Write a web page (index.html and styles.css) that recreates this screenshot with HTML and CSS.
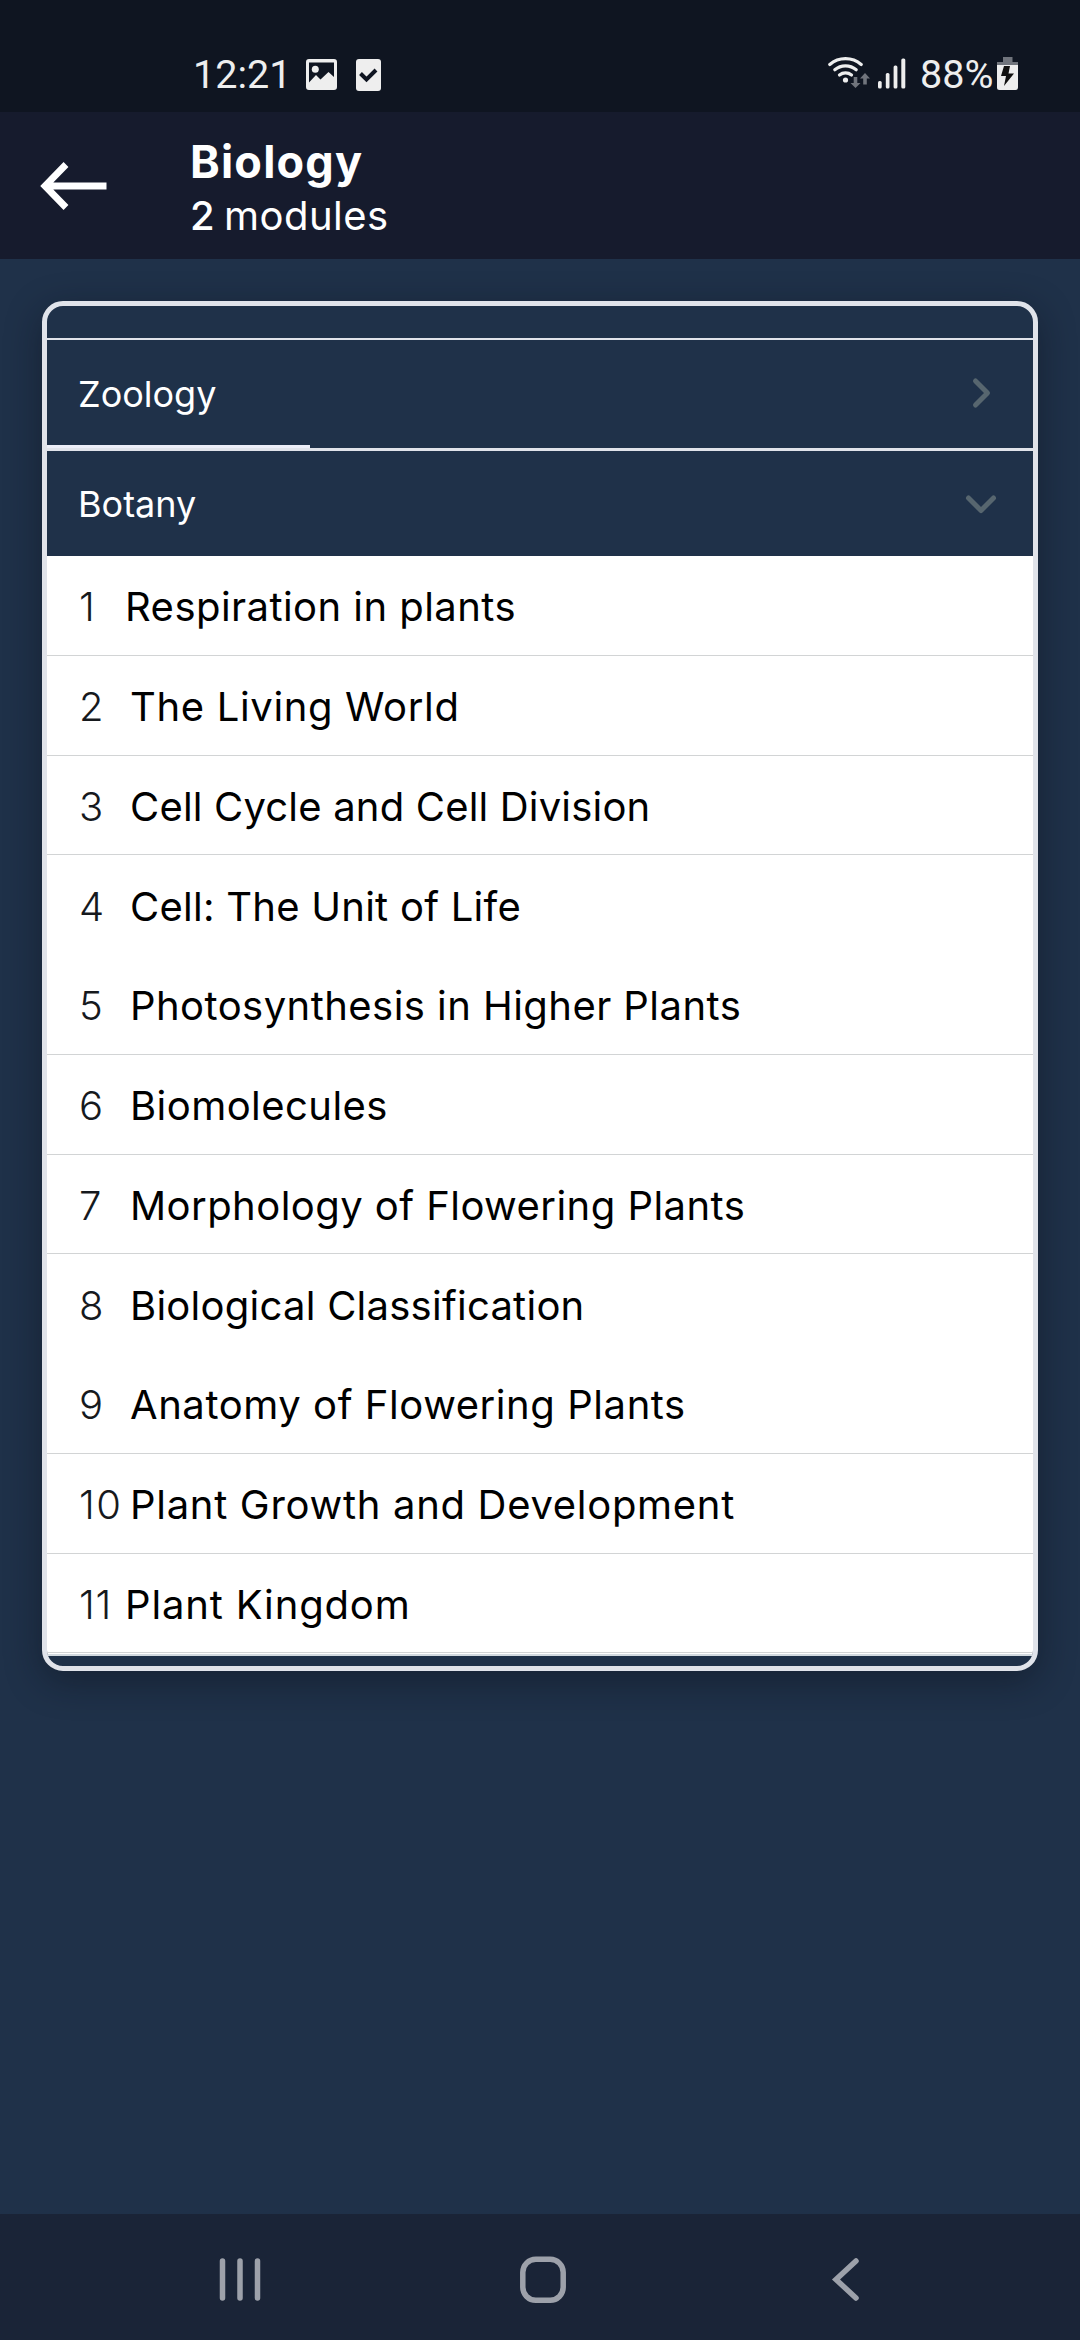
FILE: index.html
```html
<!DOCTYPE html>
<html lang="en">
<head>
  <meta charset="UTF-8">
  <meta name="viewport" content="width=device-width, initial-scale=1.0">
  <title>Biology</title>
  <link rel="stylesheet" href="styles.css">
</head>
<body>
  <div class="status-bar">
    <div class="status-left">
      <span class="clock">12:21</span>
      <svg class="icon-image" width="31" height="31" viewBox="0 0 31 31">
        <path fill="#eee" fill-rule="evenodd" d="M3 0h25a3 3 0 0 1 3 3v25a3 3 0 0 1-3 3H3a3 3 0 0 1-3-3V3a3 3 0 0 1 3-3zM3 3.500v20l7-7.500 4.500 4.500L22.500 13l5.500 5V3.500z"/>
        <circle cx="9.300" cy="10.200" r="3.500" fill="#eee"/>
      </svg>
      <svg class="icon-check" width="25" height="32" viewBox="0 0 25 32">
        <rect width="25" height="32" rx="3" fill="#eee"/>
        <path d="M4.500 14.500l6 6 9.500-9.500" fill="none" stroke="#0f1521" stroke-width="4"/>
      </svg>
    </div>
    <div class="status-right">
      <svg width="42" height="34" viewBox="0 0 42 34">
        <g fill="none" stroke="#eee" stroke-width="3.200" stroke-linecap="round">
          <path d="M1.800 9.500a24 24 0 0 1 31.400 0"/>
          <path d="M6.800 14.800a16.500 16.500 0 0 1 21.400 0"/>
          <path d="M11.500 20a9.500 9.500 0 0 1 12 0"/>
        </g>
        <circle cx="17.500" cy="25" r="2.600" fill="#eee"/>
        <path fill="#70747c" d="M25.700 22h3.600v6h3.200l-5 5-5-5h3.200zM35.200 29.500h3.600v-6H42l-5-5.500-5 5.500h3.200z"/>
      </svg>
      <svg class="icon-signal" width="28" height="31" viewBox="0 0 28 31">
        <g fill="#eee">
          <rect x="0" y="23" width="3.700" height="7.500" rx="1.500"/>
          <rect x="7.800" y="15" width="3.700" height="15.500" rx="1.500"/>
          <rect x="15.600" y="7.500" width="3.800" height="23" rx="1.500"/>
          <rect x="23.300" y="0.500" width="4" height="30" rx="1.500"/>
        </g>
      </svg>
      <span class="percent">88%</span>
      <svg class="icon-battery" width="21" height="33" viewBox="0 0 21 33">
        <path fill="#70747c" d="M6 0h9.500v5H21v4H0V5h6z"/>
        <path fill="#eee" d="M0 8h21v22.500a2.500 2.500 0 0 1-2.500 2.500h-16A2.500 2.500 0 0 1 0 30.500z"/>
        <path fill="#111" d="M7 9h6l-1.500 7.500H17L7 29l2-10H4z"/>
      </svg>
    </div>
  </div>

  <header class="header">
    <svg class="back" width="68" height="48" viewBox="0 0 68 48">
      <path d="M66.500 24H6M26 2.500L5 24l21 21.500" fill="none" stroke="#fff" stroke-width="6.800"/>
    </svg>
    <div class="heading">
      <h1>Biology</h1>
      <p><b>2</b> modules</p>
    </div>
  </header>

  <main class="content">
    <section class="card">
      <div class="module">
        <span class="zoology">Zoology</span>
        <svg width="34" height="34" viewBox="0 0 34 34">
          <path d="M11.500 4l12 12-12 12" fill="none" stroke="#57666f" stroke-width="5" stroke-linecap="round" stroke-linejoin="round"/>
        </svg>
        <div class="progress"></div>
      </div>
      <div class="module open">
        <span class="botany">Botany</span>
        <svg width="34" height="34" viewBox="0 0 34 34">
          <path d="M4.500 11L17 23.500 29.500 11" fill="none" stroke="#57666f" stroke-width="5" stroke-linecap="round" stroke-linejoin="round"/>
        </svg>
      </div>
      <ul class="chapters">
        <li><span class="num">1</span><span class="name">Respiration in plants</span></li>
        <li><span class="num">2</span><span class="name">The Living World</span></li>
        <li><span class="num">3</span><span class="name">Cell Cycle and Cell Division</span></li>
        <li class="plain"><span class="num">4</span><span class="name">Cell: The Unit of Life</span></li>
        <li><span class="num">5</span><span class="name">Photosynthesis in Higher Plants</span></li>
        <li><span class="num">6</span><span class="name">Biomolecules</span></li>
        <li><span class="num">7</span><span class="name">Morphology of Flowering Plants</span></li>
        <li class="plain"><span class="num">8</span><span class="name">Biological Classification</span></li>
        <li><span class="num">9</span><span class="name">Anatomy of Flowering Plants</span></li>
        <li><span class="num">10</span><span class="name">Plant Growth and Development</span></li>
        <li><span class="num">11</span><span class="name">Plant Kingdom</span></li>
      </ul>
    </section>
  </main>

  <nav class="nav-bar">
    <svg width="46" height="48" viewBox="0 0 46 48">
      <path d="M5.500 5v37M23 5v37M40.500 5v37" stroke="#9da1aa" stroke-width="5.500" stroke-linecap="round"/>
    </svg>
    <svg width="48" height="48" viewBox="0 0 48 48">
      <rect x="3.800" y="3.300" width="40.400" height="41" rx="13" fill="none" stroke="#9da1aa" stroke-width="5.500"/>
    </svg>
    <svg width="46" height="48" viewBox="0 0 46 48">
      <path d="M33 5L13 23.500 33 42" fill="none" stroke="#9da1aa" stroke-width="5.500" stroke-linecap="round"/>
    </svg>
  </nav>
</body>
</html>
```
FILE: styles.css
```css
* {
  box-sizing: border-box;
}
body {
  margin: 0;
  height: 2340px;
  display: flex;
  flex-direction: column;
  font-family: Inter, "Liberation Sans", sans-serif;
  background: #1f3149;
  color: #fff;
}
svg {
  display: block;
  flex: none;
}

/* status bar */
.status-bar {
  height: 112px;
  padding: 36px 62px 0 193px;
  display: flex;
  justify-content: space-between;
  background: #0f1521;
  color: #eee;
  font-family: Roboto, sans-serif;
  font-size: 39.500px;
}
.status-left,
.status-right {
  height: 76px;
  display: flex;
  align-items: flex-start;
}
.clock,
.percent {
  height: 76px;
  line-height: 46px;
  padding-top: 16px;
}
.clock {
  width: 113px;
}
.icon-image {
  margin-top: 23px;
}
.icon-check {
  margin: 23px 0 0 19px;
}
.status-right svg {
  margin-top: 19px;
}
.status-right .icon-signal {
  margin: 22px 14px 0 8px;
}
.percent {
  width: 77px;
}
.status-right .icon-battery {
  margin-top: 21px;
}

/* header */
.header {
  height: 147px;
  padding: 0 40px;
  display: flex;
  background: #161b2d;
}
.back {
  margin-top: 50px;
}
.heading {
  margin-left: 82px;
  padding-top: 22px;
}
h1 {
  margin: 0;
  font-size: 45px;
  line-height: 56px;
  font-weight: 700;
  letter-spacing: 1.200px;
}
.heading p {
  margin: 0;
  font-size: 40px;
  line-height: 51px;
  letter-spacing: 0.500px;
  word-spacing: -3px;
}
.heading b {
  font-weight: 500;
}

/* card */
.content {
  flex: 1;
  padding: 42px;
}
.card {
  height: 1370px;
  padding-top: 32px;
  border: 5px solid #e0e3ea;
  border-radius: 21px;
  background: #1f3149;
  box-shadow: 0 10px 36px rgba(10, 16, 24, 0.45);
  overflow: hidden;
}
.module {
  position: relative;
  height: 110px;
  padding: 0 35px 0 31px;
  display: flex;
  justify-content: space-between;
  align-items: center;
  border-top: 2px solid #e0e3ea;
  font-size: 36px;
}
.module.open {
  height: 108px;
  border-top-width: 3px;
}
/* sits on the divider under the module */
.progress {
  position: absolute;
  left: 0;
  bottom: 0;
  width: 263px;
  height: 3px;
  background: #eceef8;
}
.chapters {
  margin: 0;
  padding: 0;
  height: 1100px;
  list-style: none;
  background: #fff;
  border-bottom: 2px solid #d3dae0;
}
.chapters li {
  height: 99.750px;
  padding: 3px 0 0 32px;
  display: flex;
  align-items: center;
  border-bottom: 1px solid #d2d4d5;
  font-size: 40px;
  letter-spacing: 0.450px;
}
.chapters li.plain {
  border-bottom-color: #fff;
}
.num {
  width: 51px;
  flex: none;
  color: #16191d;
  font-weight: 300;
}
.name {
  color: #000;
  white-space: nowrap;
}
/* number column and tracking differ slightly from row to row */
.chapters li:nth-child(1) .num,
.chapters li:nth-child(11) .num {
  width: 46px;
}
.chapters li:nth-child(10) .num {
  letter-spacing: 1.500px;
}
.chapters li:nth-child(2) {
  letter-spacing: 0.650px;
}
.chapters li:nth-child(3) {
  letter-spacing: 0.180px;
}
.chapters li:nth-child(4),
.chapters li:nth-child(8) {
  letter-spacing: 0.250px;
}
.chapters li:nth-child(9) {
  letter-spacing: 0.570px;
}
.chapters li:nth-child(10) {
  letter-spacing: 0.700px;
}
.chapters li:nth-child(11) {
  letter-spacing: 0.850px;
}

/* system navigation */
.nav-bar {
  height: 126px;
  padding: 5px 211px 0 217px;
  display: flex;
  justify-content: space-between;
  align-items: center;
  background: #1a2437;
}
```
